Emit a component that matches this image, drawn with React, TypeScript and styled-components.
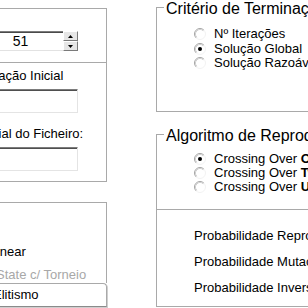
import React from "react";
import styled, { createGlobalStyle } from "styled-components";

const LINE = "#a9a9a9";
const FONT = `"Liberation Sans", Arial, sans-serif`;

const GlobalStyle = createGlobalStyle`
  html, body { margin: 0; padding: 0; background: #ffffff; }
  body { font-family: ${FONT}; font-size: 13px; color: #000; overflow: hidden; }
`;

const Screen = styled.div`
  width: 308px;
  height: 308px;
  overflow: hidden;
  display: flex;
  align-items: flex-start;
  background: #fff;
`;

const LeftColumn = styled.div`
  flex: none;
  width: 207px;
  margin-left: -100px;
  padding-top: 8px;
  display: flex;
  flex-direction: column;
`;

const Panel = styled.div<{ $height: number; $padTop: number; $bottom?: boolean; $gap?: number }>`
  box-sizing: border-box;
  height: ${(p) => p.$height}px;
  padding-top: ${(p) => p.$padTop}px;
  margin-top: ${(p) => p.$gap ?? 0}px;
  border-top: 1px solid ${LINE};
  border-right: 1px solid ${LINE};
  border-bottom: ${(p) => (p.$bottom ? `1px solid ${LINE}` : "none")};
  display: flex;
  flex-direction: column;
`;

const SpinRow = styled.div`
  display: flex;
  align-self: flex-end;
  margin-right: 28px;
`;

const SpinField = styled.div`
  box-sizing: border-box;
  width: 86px;
  height: 20px;
  border-top: 1px solid #7c7c7c;
  border-left: 1px solid #7c7c7c;
  border-bottom: 1px solid #e2e2e2;
  border-right: none;
  box-shadow: inset 0 1px 0 #4a4a4a;
  text-align: center;
  line-height: 19px;
  font-size: 14px;
`;

const SpinButtons = styled.div`
  display: flex;
  flex-direction: column;
  width: 15px;
  height: 20px;
`;

const SpinButton = styled.div`
  box-sizing: border-box;
  height: 10px;
  background: #e6e6e6;
  border-top: 1px solid #ffffff;
  border-left: 1px solid #ffffff;
  border-right: 1px solid #7a7a7a;
  border-bottom: 1px solid #7a7a7a;
  display: flex;
  align-items: center;
  justify-content: center;
`;

const Label = styled.div<{ $pad: number; $gap?: number }>`
  padding-left: ${(p) => p.$pad}px;
  margin-top: ${(p) => p.$gap ?? 0}px;
  line-height: 15px;
  white-space: nowrap;
`;

const TextBox = styled.div<{ $gap: number }>`
  box-sizing: border-box;
  align-self: flex-end;
  margin-right: 28px;
  margin-top: ${(p) => p.$gap}px;
  width: 140px;
  height: 24px;
  background: #fff;
  border-top: 1px solid #7c7c7c;
  border-left: 1px solid #7c7c7c;
  border-right: 1px solid #e4e4e4;
  border-bottom: 1px solid #e4e4e4;
  box-shadow: inset 0 1px 0 #4f4f4f;
`;

const ChoiceList = styled.div<{ $pad: number; $gap: number }>`
  display: flex;
  flex-direction: column;
  gap: ${(p) => p.$gap}px;
  padding-left: ${(p) => p.$pad}px;
`;

const Choice = styled.div<{ $line: number; $disabled?: boolean }>`
  display: flex;
  align-items: center;
  gap: 8px;
  height: ${(p) => p.$line}px;
  line-height: ${(p) => p.$line}px;
  white-space: nowrap;
  color: ${(p) => (p.$disabled ? "#a8a8a8" : "#000")};
`;

const CheckPanel = styled.div`
  box-sizing: border-box;
  height: 24px;
  padding: 3px 0 0 93px;
  border-top: 1px solid ${LINE};
  border-right: 1px solid ${LINE};
  border-bottom: 1px solid #8a8a8a;
  border-top-right-radius: 4px;
  box-shadow: 1px 1px 0 #cfcfcf;
  line-height: 15px;
  white-space: nowrap;
`;

const RightColumn = styled.div`
  flex: none;
  width: 360px;
  margin-left: 49px;
  padding-top: 7px;
  display: flex;
  flex-direction: column;
`;

const Group = styled.div<{ $height: number; $padTop: number; $gap?: number; $noTop?: boolean }>`
  position: relative;
  box-sizing: border-box;
  height: ${(p) => p.$height}px;
  margin-top: ${(p) => p.$gap ?? 0}px;
  padding-top: ${(p) => p.$padTop}px;
  border-left: 1px solid ${LINE};
  border-top: ${(p) => (p.$noTop ? "none" : `1px solid ${LINE}`)};
  border-bottom: 1px solid ${LINE};
`;

const GroupTitle = styled.div`
  position: absolute;
  top: -8px;
  left: 7px;
  padding: 0 2px;
  background: #fff;
  font-size: 16px;
  line-height: 18px;
  white-space: nowrap;
`;

const FieldLabels = styled.div`
  display: flex;
  flex-direction: column;
  gap: 11px;
  padding-left: 37px;
`;

const FieldLabel = styled.div`
  line-height: 15px;
  white-space: nowrap;
`;

const Radio = ({ checked }: { checked?: boolean }) => (
  <svg width="12" height="12" viewBox="0 0 12 12" style={{ flex: "none" }}>
    <circle cx="6" cy="6" r="5" fill="#ffffff" />
    <path d="M9.89 2.11 A5.5 5.5 0 0 0 2.11 9.89" fill="none" stroke="#a3a3a3" strokeWidth="1" />
    <path d="M2.11 9.89 A5.5 5.5 0 0 0 9.89 2.11" fill="none" stroke="#f2f2f2" strokeWidth="1" />
    <path d="M9.18 2.82 A4.5 4.5 0 0 0 2.82 9.18" fill="none" stroke="#d0d0d0" strokeWidth="1" />
    {checked && <circle cx="6" cy="6" r="2" fill="#000" />}
  </svg>
);

const Arrow = ({ up }: { up?: boolean }) => (
  <svg width="5" height="3" viewBox="0 0 5 3">
    <path d={up ? "M0 3 L2.5 0 L5 3 Z" : "M0 0 L2.5 3 L5 0 Z"} fill="#000" />
  </svg>
);

export default function App() {
  return (
    <>
      <GlobalStyle />
      <Screen>
        <LeftColumn>
          <Panel $height={54} $padTop={22}>
            <SpinRow>
              <SpinField>51</SpinField>
              <SpinButtons>
                <SpinButton>
                  <Arrow up />
                </SpinButton>
                <SpinButton>
                  <Arrow />
                </SpinButton>
              </SpinButtons>
            </SpinRow>
          </Panel>
          <Panel $height={120} $padTop={5} $bottom>
            <Label $pad={65}>População Inicial</Label>
            <TextBox $gap={6} />
            <Label $pad={48} $gap={13}>
              Pop. Inicial do Ficheiro:
            </Label>
            <TextBox $gap={6} />
          </Panel>
          <Panel $height={81} $padTop={18} $gap={20}>
            <ChoiceList $pad={32} $gap={8}>
              <Choice $line={15}>
                <Radio checked />
                Roleta
              </Choice>
              <Choice $line={15}>
                <Radio />
                Rank. Linear
              </Choice>
              <Choice $line={15} $disabled>
                <Radio />
                Steady State c/ Torneio
              </Choice>
            </ChoiceList>
          </Panel>
          <CheckPanel>Elitismo</CheckPanel>
        </LeftColumn>

        <RightColumn>
          <Group $height={105} $padTop={19}>
            <GroupTitle>Critério de Terminação</GroupTitle>
            <ChoiceList $pad={37} $gap={0}>
              <Choice $line={14.5}>
                <Radio />
                Nº Iterações
              </Choice>
              <Choice $line={14.5}>
                <Radio checked />
                Solução Global
              </Choice>
              <Choice $line={14.5}>
                <Radio />
                Solução Razoável
              </Choice>
            </ChoiceList>
          </Group>
          <Group $height={76} $padTop={17} $gap={22}>
            <GroupTitle>Algoritmo de Reprodução</GroupTitle>
            <ChoiceList $pad={37} $gap={0}>
              <Choice $line={14}>
                <Radio checked />
                <span>
                  Crossing Over <b>One Point</b>
                </span>
              </Choice>
              <Choice $line={14}>
                <Radio />
                <span>
                  Crossing Over <b>Two Point</b>
                </span>
              </Choice>
              <Choice $line={14}>
                <Radio />
                <span>
                  Crossing Over <b>Uniforme</b>
                </span>
              </Choice>
            </ChoiceList>
          </Group>
          <Group $height={97} $padTop={18} $noTop>
            <FieldLabels>
              <FieldLabel>Probabilidade Reprodução</FieldLabel>
              <FieldLabel>Probabilidade Mutação</FieldLabel>
              <FieldLabel>Probabilidade Inversão</FieldLabel>
            </FieldLabels>
          </Group>
        </RightColumn>
      </Screen>
    </>
  );
}
